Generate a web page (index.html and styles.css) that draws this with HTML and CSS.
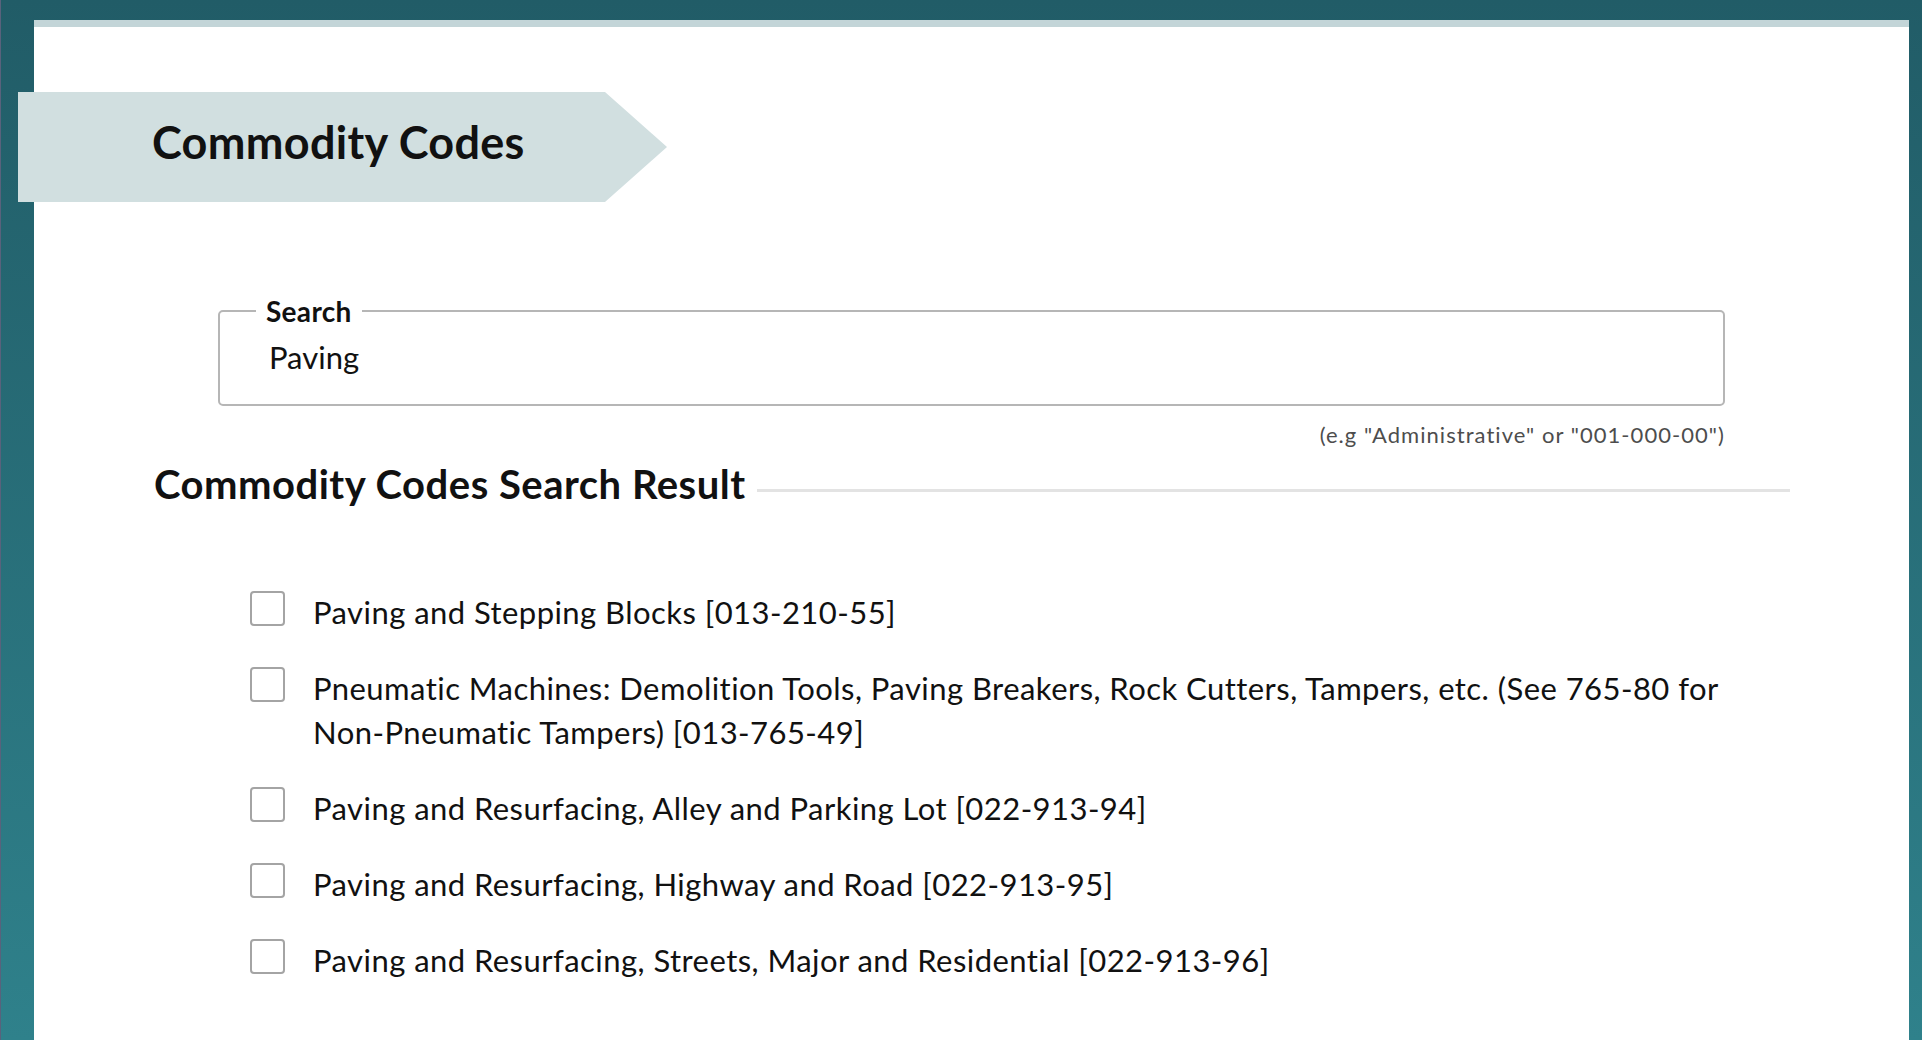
FILE: index.html
```html
<!DOCTYPE html>
<html lang="en">
<head>
    <meta charset="UTF-8">
    <meta name="viewport" content="width=device-width, initial-scale=1.0">
    <title>Commodity Codes</title>
    <link rel="stylesheet" href="styles.css">
</head>
<body>
    <div class="page">
        <div class="banner">
            <h1>Commodity Codes</h1>
        </div>

        <div class="content">
            <!-- Search field -->
            <div class="search">
                <fieldset class="search-box">
                    <legend>Search</legend>
                    <input type="text" id="search" value="Paving" aria-label="Search">
                </fieldset>
                <p class="hint">(e.g "Administrative" or "001-000-00")</p>
            </div>

            <!-- Results -->
            <div class="results">
                <div class="results-head">
                    <h2>Commodity Codes Search Result</h2>
                    <span class="rule"></span>
                </div>
                <ul class="code-list">
                    <li><label><input type="checkbox"><span>Paving and Stepping Blocks [013-210-55]</span></label></li>
                    <li><label><input type="checkbox"><span>Pneumatic Machines: Demolition Tools, Paving Breakers, Rock Cutters, Tampers, etc. (See 765-80 for Non-Pneumatic Tampers) [013-765-49]</span></label></li>
                    <li><label><input type="checkbox"><span>Paving and Resurfacing, Alley and Parking Lot [022-913-94]</span></label></li>
                    <li><label><input type="checkbox"><span>Paving and Resurfacing, Highway and Road [022-913-95]</span></label></li>
                    <li><label><input type="checkbox"><span>Paving and Resurfacing, Streets, Major and Residential [022-913-96]</span></label></li>
                </ul>
            </div>
        </div>
    </div>
</body>
</html>
```

FILE: styles.css
```css
html, body {
    height: 100%;
}

body {
    margin: 0;
    overflow: hidden;
    box-sizing: border-box;
    border-left: 1px solid #59627c;
    background: linear-gradient(#215c67, #2f818b);
    font-family: Lato, sans-serif;
    color: #111;
}

.page {
    height: calc(100% - 20px);
    margin: 20px 13px 0 33px;
    box-sizing: border-box;
    background: #fff;
    border-top: 7px solid #c3d5d8;
}

/* arrow shaped page title */
.banner {
    width: 649px;
    height: 110px;
    margin: 65px 0 0 -16px;
    padding: 24px 0 0 134px;
    box-sizing: border-box;
    background: #d1dfe0;
    clip-path: polygon(0 0, 587px 0, 100% 50%, 587px 100%, 0 100%);
}

.banner h1 {
    margin: 0;
    font-size: 45px;
    line-height: 53px;
    font-weight: 700;
    letter-spacing: 0.3px;
}

.content {
    width: 1636px;
    padding-left: 120px;
}

.search {
    width: 1507px;
    margin: 92px 0 0 64px;
}

.search-box {
    margin: 0;
    padding: 10px 20px 28px 36px;
    border: 2px solid #b6b6b6;
    border-radius: 5px;
}

.search-box legend {
    padding: 0 10px;
    font-size: 28px;
    line-height: 34px;
    font-weight: 700;
    letter-spacing: 0.3px;
}

#search {
    display: block;
    width: 100%;
    height: 38px;
    padding: 0 0 0 13px;
    box-sizing: border-box;
    border: none;
    outline: none;
    background: transparent;
    font-family: Lato, sans-serif;
    font-size: 31px;
    line-height: 38px;
    color: #111;
}

.hint {
    margin: 15px 0 0;
    text-align: right;
    font-size: 22px;
    line-height: 27px;
    letter-spacing: 1.05px;
    color: #4d4d4d;
}

.results-head {
    display: flex;
    align-items: flex-start;
    margin-top: 13px;
}

.results-head h2 {
    margin: 0;
    font-size: 40px;
    line-height: 46px;
    font-weight: 700;
    letter-spacing: 0.5px;
}

.rule {
    flex: 1;
    height: 3px;
    margin: 28px 0 0 11px;
    background: #e3e3e3;
}

.code-list {
    list-style: none;
    margin: 84px 25px 0 96px;
    padding: 0;
}

.code-list li {
    margin-bottom: 33px;
}

.code-list label {
    display: flex;
    align-items: flex-start;
    gap: 28px;
    font-size: 31px;
    line-height: 44px;
    letter-spacing: 0.45px;
    cursor: pointer;
}

.code-list label span {
    margin-top: -1px;
}

.code-list input[type="checkbox"] {
    appearance: none;
    flex: none;
    width: 35px;
    height: 35px;
    margin: 0;
    border: 2px solid #a4a4a4;
    border-radius: 4px;
    background: #fff;
    cursor: pointer;
}

.code-list input[type="checkbox"]:checked {
    background: #2a7580;
    border-color: #2a7580;
}
```
